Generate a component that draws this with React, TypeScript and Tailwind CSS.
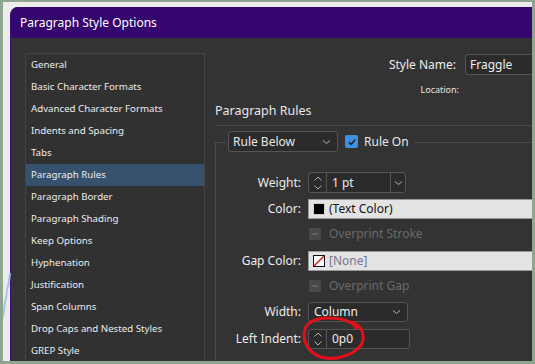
import React from 'react';

const LIST_ITEMS = [
  'General',
  'Basic Character Formats',
  'Advanced Character Formats',
  'Indents and Spacing',
  'Tabs',
  'Paragraph Rules',
  'Paragraph Border',
  'Paragraph Shading',
  'Keep Options',
  'Hyphenation',
  'Justification',
  'Span Columns',
  'Drop Caps and Nested Styles',
  'GREP Style',
];

function Chevron() {
  return (
    <svg width="9" height="6" viewBox="0 0 9 6">
      <path d="M1 1.5 L4.5 4.5 L8 1.5" fill="none" stroke="#b8b8b8" strokeWidth="1" />
    </svg>
  );
}

function SpinArrows() {
  return (
    <div className="w-[18px] h-full flex items-center justify-center border-r border-[#555]">
      <svg width="10" height="16" viewBox="0 0 10 16">
        <path d="M1.5 5.5 L5 2 L8.5 5.5" fill="none" stroke="#b0b0b0" strokeWidth="1" />
        <path d="M1.5 10.5 L5 14 L8.5 10.5" fill="none" stroke="#b0b0b0" strokeWidth="1" />
      </svg>
    </div>
  );
}

function Label({ children }: { children: React.ReactNode }) {
  return <div className="w-[85px] shrink-0 text-right text-[12px] text-[#ececec]">{children}</div>;
}

function DisabledCheck({ label }: { label: string }) {
  return (
    <div className="flex items-center h-[20px] pl-[93px] gap-[8px]">
      <div className="w-[12px] h-[12px] rounded-[2px] bg-[#4a4a4a] flex items-center justify-center">
        <div className="w-[6px] h-[2px] bg-[#606060]" />
      </div>
      <span className="text-[12px] text-[#6a6a6a]">{label}</span>
    </div>
  );
}

export default function App() {
  return (
    <div className="relative w-[535px] h-[364px] bg-[#8ea58e] pt-[2px] pl-[3px] pr-[3px] pb-[3px] overflow-hidden font-['Noto_Sans',sans-serif]">
      <div className="relative h-full bg-[#ececec] pt-[5px] pl-[7px]">
        {/* bit of a chart behind the dialog */}
        <svg className="absolute left-0 top-0 pointer-events-none" width="8" height="364">
          <path d="M0 315 L2 300 L3 296 L4 288 L6 280 L7 271" fill="none" stroke="#a9c3e8" strokeWidth="2" />
        </svg>

        <div className="flex flex-col h-full rounded-tl-[8px] overflow-hidden bg-[#333333] border-l border-[#3a0d78]">
          {/* title bar */}
          <div className="h-[31px] shrink-0 bg-[#34066e] flex items-center pl-[9px] pt-px text-white text-[12px]">
            Paragraph Style Options
          </div>

          <div className="flex flex-1 min-h-0 pt-[15px] pl-[14px]">
            {/* category list */}
            <div className="w-[180px] h-[340px] shrink-0 border border-[#444] bg-[#313131] text-[9.7px] text-[#ececec]">
              {LIST_ITEMS.map((item) => (
                <div
                  key={item}
                  className={`h-[22px] flex items-center pl-[5px] pt-px ${item === 'Paragraph Rules' ? 'bg-[#35516e]' : ''}`}
                >
                  {item}
                </div>
              ))}
            </div>

            {/* settings */}
            <div className="flex-1 min-w-0 pl-[10px] flex flex-col">
              <div className="mt-[1px] h-[21px] flex items-center justify-end gap-[9px]">
                <span className="text-[12px] text-[#ececec]">Style Name:</span>
                <div className="w-[67px] h-full border border-r-0 border-[#555] rounded-l-[3px] bg-[#2b2b2b] flex items-center pl-[4px] text-[12px] text-[#f0f0f0]">
                  Fraggle
                </div>
              </div>
              <div className="mt-[8px] h-[14px] flex items-center justify-end pr-[73px] text-[9px] text-[#e6e6e6]">
                Location:
              </div>
              <div className="mt-[5px] h-[18px] flex items-center text-[12.5px] text-[#e6e6e6]">Paragraph Rules</div>
              <div className="mt-[5px] h-px bg-[#474747]" />

              {/* legend */}
              <div className="relative z-10 mt-[5px] ml-[11px] w-fit bg-[#333333] pl-[2px] pr-[6px] flex items-center h-[21px]">
                <div className="w-[110px] h-full border border-[#555] rounded-[3px] bg-[#2b2b2b] flex items-center justify-between pl-[4px] pr-[6px] text-[12px] text-[#e8e8e8]">
                  <span>Rule Below</span>
                  <Chevron />
                </div>
                <div className="ml-[7px] w-[13px] h-[13px] rounded-[2px] bg-[#3f8fe3] flex items-center justify-center">
                  <svg width="10" height="10" viewBox="0 0 10 10">
                    <path d="M2 5.2 L4.2 7.4 L8.2 2.6" fill="none" stroke="#1c1c1c" strokeWidth="1.5" />
                  </svg>
                </div>
                <span className="ml-[6px] text-[12px] text-[#e8e8e8]">Rule On</span>
              </div>

              {/* group box */}
              <div className="-mt-[10px] flex-1 border-t border-l border-[#4c4c4c] pt-[29px] flex flex-col">
                <div className="h-[21px] flex items-center gap-[7px]">
                  <Label>Weight:</Label>
                  <div className="w-[98px] h-full border border-[#555] rounded-[3px] bg-[#2b2b2b] flex items-center">
                    <SpinArrows />
                    <div className="flex-1 pl-[5px] text-[12px] text-[#ececec]">1 pt</div>
                    <div className="w-[15px] h-full border-l border-[#555] flex items-center justify-center">
                      <Chevron />
                    </div>
                  </div>
                </div>

                <div className="mt-[6px] h-[20px] flex items-center gap-[7px]">
                  <Label>Color:</Label>
                  <div className="flex-1 h-full bg-[#e3e3e3] border-y border-l border-[#999] flex items-center pl-[4px] gap-[4px]">
                    <div className="w-[12px] h-[12px] bg-black border border-[#cfcfcf]" />
                    <span className="text-[12px] text-[#111]">(Text Color)</span>
                  </div>
                </div>

                <div className="mt-[5px]">
                  <DisabledCheck label="Overprint Stroke" />
                </div>

                <div className="mt-[7px] h-[20px] flex items-center gap-[7px]">
                  <Label>Gap Color:</Label>
                  <div className="flex-1 h-full bg-[#e3e3e3] border-y border-l border-[#999] flex items-center pl-[4px] gap-[4px]">
                    <svg width="12" height="12" viewBox="0 0 12 12">
                      <rect x="0.5" y="0.5" width="11" height="11" fill="#fff" stroke="#111" />
                      <path d="M1 11 L11 1" stroke="#e0141e" strokeWidth="1.5" />
                    </svg>
                    <span className="text-[12px] text-[#75758f]">[None]</span>
                  </div>
                </div>

                <div className="mt-[5px]">
                  <DisabledCheck label="Overprint Gap" />
                </div>

                <div className="mt-[6px] h-[20px] flex items-center gap-[7px]">
                  <Label>Width:</Label>
                  <div className="w-[100px] h-full border border-[#555] rounded-[3px] bg-[#2b2b2b] flex items-center justify-between pl-[5px] pr-[6px] text-[12px] text-[#ececec]">
                    <span>Column</span>
                    <Chevron />
                  </div>
                </div>

                <div className="mt-[7px] h-[20px] flex items-center gap-[7px]">
                  <Label>Left Indent:</Label>
                  <div className="w-[102px] h-full border border-[#555] rounded-[3px] bg-[#2b2b2b] flex items-center">
                    <SpinArrows />
                    <div className="flex-1 pl-[5px] text-[12px] text-[#ececec]">0p0</div>
                  </div>
                </div>
              </div>
            </div>
          </div>
        </div>
      </div>

      {/* red hand-drawn annotation */}
      <svg className="absolute left-0 top-0 pointer-events-none" width="535" height="364">
        <path
          d="M356 328 C352 318, 322 314, 309 323 C300 331, 303 351, 321 357 C338 362, 361 352, 363 340 C364 332, 361 326, 352 322"
          fill="none"
          stroke="#e3101c"
          strokeWidth="3"
          strokeLinecap="round"
        />
      </svg>
    </div>
  );
}
